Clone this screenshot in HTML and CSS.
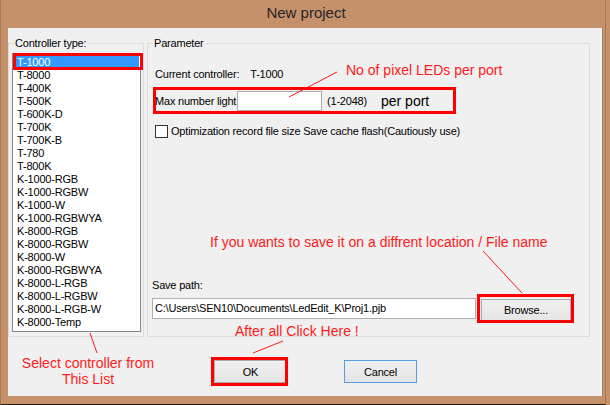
FILE: index.html
```html
<!DOCTYPE html>
<html>
<head>
<meta charset="utf-8">
<link rel="stylesheet" href="styles.css">
</head>
<body>
<div class="window">
  <div class="titlebar">New project</div>
  <div class="client">
    <div class="groups">
      <div class="group group-left">
        <div class="group-title">Controller type:</div>
        <ul class="listbox">
          <li class="sel">T-1000</li>
          <li>T-8000</li>
          <li>T-400K</li>
          <li>T-500K</li>
          <li>T-600K-D</li>
          <li>T-700K</li>
          <li>T-700K-B</li>
          <li>T-780</li>
          <li>T-800K</li>
          <li>K-1000-RGB</li>
          <li>K-1000-RGBW</li>
          <li>K-1000-W</li>
          <li>K-1000-RGBWYA</li>
          <li>K-8000-RGB</li>
          <li>K-8000-RGBW</li>
          <li>K-8000-W</li>
          <li>K-8000-RGBWYA</li>
          <li>K-8000-L-RGB</li>
          <li>K-8000-L-RGBW</li>
          <li>K-8000-L-RGB-W</li>
          <li>K-8000-Temp</li>
        </ul>
      </div>
      <div class="group group-param">
        <div class="group-title">Parameter</div>
        <div class="row current">Current controller:<span class="cur-val">T-1000</span></div>
        <div class="row maxrow">
          <span class="maxlabel">Max number light</span>
          <span class="textbox small"></span>
          <span class="range">(1-2048)</span>
          <span class="perport">per port</span>
        </div>
        <div class="row check"><span class="checkbox"></span><span>Optimization record file size Save cache flash(Cautiously use)</span></div>
        <div class="savelabel">Save path:</div>
        <div class="saverow">
          <div class="textbox path">C:\Users\SEN10\Documents\LedEdit_K\Proj1.pjb</div>
          <div class="btn browse">Browse...</div>
        </div>
      </div>
    </div>
    <div class="buttons">
      <div class="btn ok">OK</div>
      <div class="btn cancel">Cancel</div>
    </div>
  </div>
</div>

<div class="annotations">
  <svg class="annot-lines" width="610" height="405" viewBox="0 0 610 405">
    <line x1="289" y1="97" x2="337" y2="72"/>
    <line x1="483" y1="251" x2="522" y2="293"/>
    <line x1="253" y1="353" x2="283" y2="341"/>
    <line x1="90" y1="333" x2="97" y2="353"/>
  </svg>
  <div class="hl hl-sel"></div>
  <div class="hl hl-max"></div>
  <div class="hl hl-browse"></div>
  <div class="hl hl-ok"></div>
  <div class="note note-leds">No of pixel LEDs per port</div>
  <div class="note note-save">If you wants to save it on a diffrent location / File name</div>
  <div class="note note-ok">After all Click Here !</div>
  <div class="note note-list">Select controller from<br>This List</div>
</div>
</body>
</html>
```

FILE: styles.css
```css
html, body {
  margin: 0;
  padding: 0;
}
body {
  width: 610px;
  height: 405px;
  overflow: hidden;
  position: relative;
  background: #c4916b;
  font-family: "Liberation Sans", Arial, sans-serif;
  font-size: 11px;
  color: #000;
}
.window {
  width: 606px;
  height: 405px;
  box-sizing: border-box;
  border-left: 1px solid #a87a57;
  border-right: 1px solid #a87a57;
  border-bottom: 1px solid #1a1a1a;
  display: flex;
  flex-direction: column;
}
.titlebar {
  height: 28px;
  line-height: 26px;
  text-align: center;
  font-size: 15px;
  color: #262626;
  padding-left: 6px;
}
.client {
  margin-left: 7px;
  width: 594px;
  height: 368px;
  box-sizing: border-box;
  background: #f0f0f0;
  box-shadow: 1px 0 0 #ab8262;
  padding-top: 15px;
  display: flex;
  flex-direction: column;
  letter-spacing: -0.2px;
}
.groups {
  display: flex;
  gap: 3px;
}
.group {
  border: 1px solid #dcdcdc;
  height: 294px;
  box-sizing: border-box;
  display: flex;
  flex-direction: column;
}
.group-title {
  margin-top: -7px;
  line-height: 13px;
  height: 13px;
  background: #f0f0f0;
  align-self: flex-start;
  white-space: nowrap;
}
.group-left {
  width: 136px;
}
.group-left .group-title {
  margin-left: 5px;
  padding: 0 1px;
}
.listbox {
  list-style: none;
  margin: 3px 0 0 3px;
  padding: 2px 0 0 0;
  width: 129px;
  height: 279px;
  box-sizing: border-box;
  background: #fff;
  border: 1px solid #828790;
}
.listbox li {
  height: 13px;
  line-height: 13px;
  padding-left: 3px;
  margin: 0 1px;
  white-space: nowrap;
}
.listbox li.sel {
  background: #3399ff;
  color: #fff;
}
.group-param {
  width: 443px;
  padding-bottom: 15px;
}
.group-param .group-title {
  margin-left: 5px;
  padding: 0 1px;
}
.row {
  display: flex;
  align-items: center;
  padding-left: 7px;
  white-space: nowrap;
}
.current {
  margin-top: 18px;
  height: 13px;
  line-height: 13px;
}
.cur-val {
  margin-left: 11px;
}
.maxrow {
  margin-top: 10px;
  height: 20px;
}
.maxlabel {
  width: 82px;
  white-space: nowrap;
}
.textbox {
  background: #fff;
  border: 1px solid #abadb3;
  box-sizing: border-box;
}
.textbox.small {
  width: 85px;
  height: 20px;
}
.range {
  margin-left: 5px;
}
.perport {
  margin-left: 14px;
  font-size: 14px;
  line-height: 16px;
  letter-spacing: 0;
}
.check {
  margin-top: 14px;
  height: 13px;
  line-height: 13px;
}
.checkbox {
  width: 13px;
  height: 13px;
  box-sizing: border-box;
  border: 1px solid #333;
  background: #fff;
  margin-right: 3px;
  flex: none;
}
.savelabel {
  margin-top: auto;
  margin-left: 4px;
  line-height: 13px;
  height: 13px;
  margin-bottom: 6px;
}
.saverow {
  display: flex;
  align-items: flex-start;
  margin-left: 4px;
  height: 23px;
}
.textbox.path {
  width: 324px;
  height: 21px;
  line-height: 19px;
  padding-left: 2px;
  white-space: nowrap;
}
.btn {
  box-sizing: border-box;
  border: 1px solid #acacac;
  background: linear-gradient(#f0f0f0, #e5e5e5);
  text-align: center;
  display: flex;
  align-items: center;
  justify-content: center;
}
.browse {
  margin-left: 5px;
  margin-top: 1px;
  width: 90px;
  height: 22px;
}
.buttons {
  display: flex;
  gap: 57px;
  margin-top: 23px;
  padding-left: 206px;
}
.buttons .btn {
  width: 73px;
  height: 23px;
}
.cancel {
  border-color: #569de5;
}
.annotations {
  position: absolute;
  left: 0;
  top: 0;
  width: 610px;
  height: 405px;
  pointer-events: none;
}
.annot-lines {
  position: absolute;
  left: 0;
  top: 0;
}
.annot-lines line {
  stroke: #ff1a1a;
  stroke-width: 1;
}
.hl {
  position: absolute;
  border: 3px solid #ff0000;
  box-sizing: border-box;
}
.hl-sel { left: 13px; top: 53px; width: 130px; height: 17px; }
.hl-max { left: 153px; top: 87px; width: 303px; height: 27px; }
.hl-browse { left: 477px; top: 294px; width: 97px; height: 29px; }
.hl-ok { left: 211px; top: 357px; width: 77px; height: 29px; }
.note {
  position: absolute;
  color: #ff1a1a;
  font-size: 14px;
  line-height: 16px;
  white-space: nowrap;
}
.note-leds { left: 346px; top: 62px; }
.note-save { left: 210px; top: 234px; }
.note-ok { left: 235px; top: 323px; }
.note-list { left: 10px; top: 355px; width: 156px; text-align: center; }
```
